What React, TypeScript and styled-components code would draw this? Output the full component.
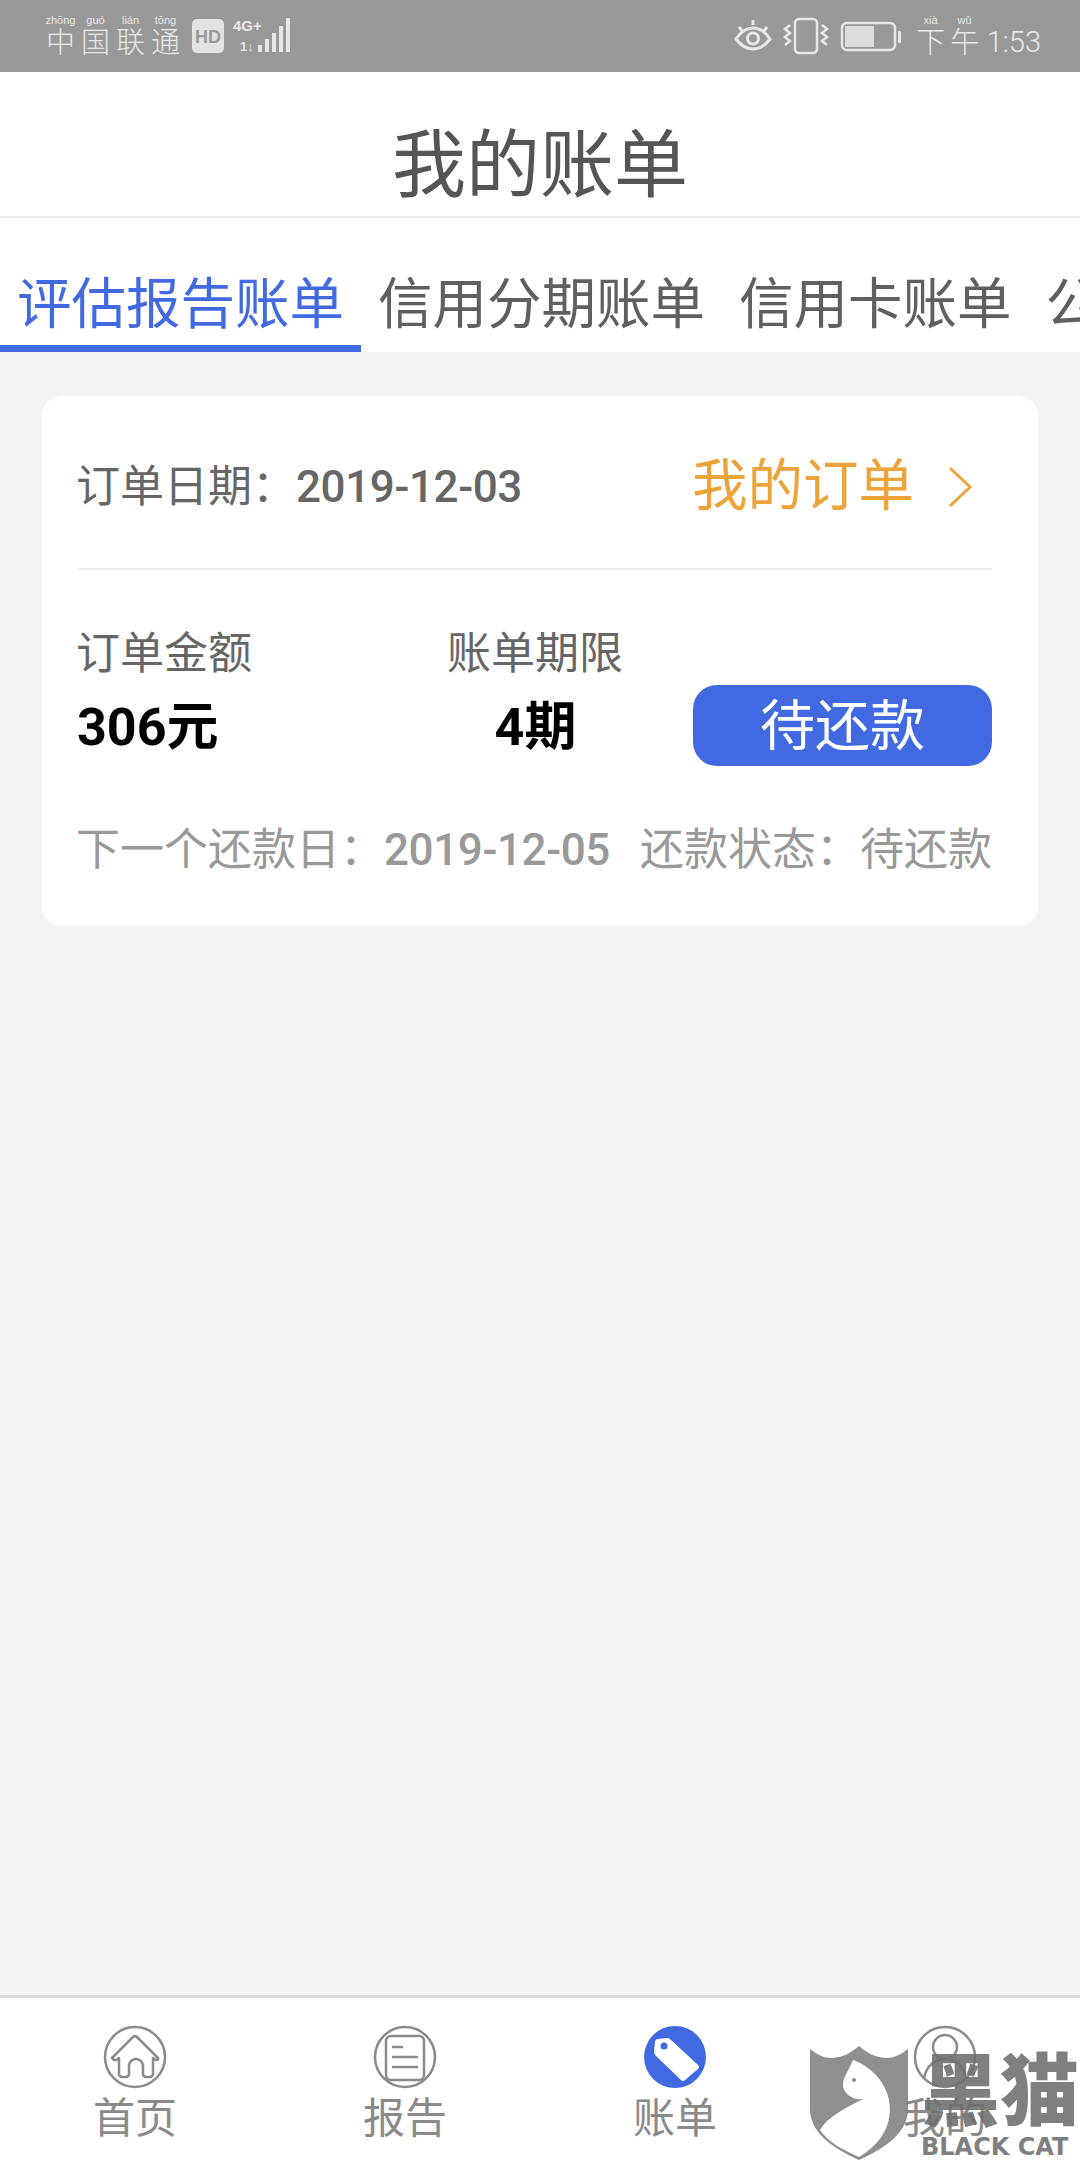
import styled, { createGlobalStyle } from "styled-components"

const CJK = `"Roboto", "Noto Sans CJK SC", sans-serif`

const GlobalStyle = createGlobalStyle`
    html, body {
        margin: 0;
        padding: 0;
        background: #f4f4f4;
    }
    * {
        box-sizing: border-box;
    }
`

const Page = styled.div`
    position: relative;
    width: 1080px;
    height: 2160px;
    display: flex;
    flex-direction: column;
    overflow: hidden;
    background: #f4f4f4;
    font-family: ${CJK};
`

// ── Status bar ────────────────────────────────────────────────────────────────

const StatusBar = styled.div`
    height: 72px;
    flex-shrink: 0;
    display: flex;
    align-items: center;
    justify-content: space-between;
    padding: 0 39px 0 43px;
    background: #999999;
    color: #e6e6e6;
`

const StatusGroup = styled.div`
    display: flex;
    align-items: center;
`

const PinyinCol = styled.div<{ $narrow?: boolean }>`
    width: ${({ $narrow }) => ($narrow ? 34 : 35)}px;
    display: flex;
    flex-direction: column;
    align-items: center;
    font-weight: 300;
`

const Pinyin = styled.span`
    font-size: 11px;
    line-height: 12px;
    height: 12px;
    margin-top: 2px;
    font-family: "Liberation Sans", sans-serif;
`

const PinyinChar = styled.span`
    font-size: 29px;
    line-height: 34px;
`

const StatusTime = styled.span`
    margin-left: 5px;
    margin-top: 12px;
    font-size: 29px;
    line-height: 36px;
    font-weight: 300;
`

// ── Header and tabs ───────────────────────────────────────────────────────────

const Header = styled.header`
    height: 146px;
    flex-shrink: 0;
    display: flex;
    align-items: center;
    justify-content: center;
    padding-top: 44px;
    background: #ffffff;
    border-bottom: 2px solid #e9e9e9;
    font-size: 74px;
    line-height: 80px;
    color: #555555;
`

const Tabs = styled.nav`
    height: 134px;
    flex-shrink: 0;
    display: flex;
    background: #ffffff;
    overflow: hidden;
`

const Tab = styled.div<{ $active?: boolean }>`
    flex-shrink: 0;
    padding: 59px 17px 14px;
    font-size: 54.500px;
    line-height: 54px;
    white-space: nowrap;
    color: ${({ $active }) => ($active ? "#4169e1" : "#5f5f5f")};
    border-bottom: 7px solid ${({ $active }) => ($active ? "#4169e1" : "transparent")};
`

// ── Bill card ─────────────────────────────────────────────────────────────────

const Card = styled.section`
    margin: 44px 42px 0;
    padding: 0 46px 54px 36px;
    border-radius: 20px;
    background: #ffffff;
`

const CardTop = styled.div`
    height: 174px;
    display: flex;
    align-items: center;
    justify-content: space-between;
    padding-top: 9px;
    border-bottom: 2px solid #eeeeee;
`

const OrderDate = styled.div`
    margin-left: -2px;
    font-size: 44px;
    line-height: 54px;
    color: #666666;
    white-space: nowrap;
`

const DateValue = styled.span`
    font-weight: 500;
    letter-spacing: -0.4px;
`

const OrderLink = styled.div`
    display: flex;
    align-items: center;
    font-size: 55.500px;
    line-height: 64px;
    color: #eba33a;
    padding-right: 18px;
`

const Chevron = styled.svg`
    margin-left: 32px;
`

const Metrics = styled.div`
    display: flex;
    align-items: flex-end;
`

const Metric = styled.div<{ $width: number; $center?: boolean }>`
    width: ${({ $width }) => $width}px;
    margin-bottom: 10px;
    display: flex;
    flex-direction: column;
    gap: 24px;
    padding-top: 62px;
    align-items: ${({ $center }) => ($center ? "center" : "flex-start")};
`

const MetricLabel = styled.div`
    margin-left: -2px;
    font-size: 44px;
    line-height: 44px;
    color: #666666;
    white-space: nowrap;
`

const MetricValue = styled.div`
    margin-left: -1px;
    font-size: 52px;
    line-height: 56px;
    font-weight: 700;
    color: #000000;
    white-space: nowrap;
`

const StatusButton = styled.div`
    width: 299px;
    height: 81px;
    margin-left: auto;
    display: flex;
    align-items: center;
    justify-content: center;
    border-radius: 24px;
    background: #4169e1;
    color: #ffffff;
    font-size: 55px;
    line-height: 60px;
`

const CardFooter = styled.div`
    margin-top: 62px;
    margin-left: -2px;
    display: flex;
    justify-content: space-between;
    font-size: 44px;
    line-height: 44px;
    color: #999999;
    white-space: nowrap;
`

// ── Bottom navigation ─────────────────────────────────────────────────────────

const Spacer = styled.div`
    flex: 1;
`

const BottomNav = styled.nav`
    height: 165px;
    flex-shrink: 0;
    display: flex;
    padding-top: 27px;
    background: #ffffff;
    border-top: 3px solid #dddddd;
`

const NavItem = styled.div`
    width: 270px;
    display: flex;
    flex-direction: column;
    align-items: center;
    gap: 8px;
    font-size: 42px;
    line-height: 44px;
    color: #8a8a8a;
`

// ── Watermark ─────────────────────────────────────────────────────────────────

const Watermark = styled.div`
    position: absolute;
    left: 810px;
    top: 2046px;
    display: flex;
    gap: 13px;
    color: #6e6e6e;
    opacity: 0.88;
`

const WatermarkText = styled.div`
    display: flex;
    flex-direction: column;
    padding-top: 5px;
`

const WatermarkTitle = styled.span`
    font-size: 79px;
    line-height: 84px;
    font-weight: 900;
    white-space: nowrap;
`

const WatermarkSub = styled.span`
    font-family: "DejaVu Sans", sans-serif;
    font-size: 24px;
    line-height: 24px;
    font-weight: 700;
    white-space: nowrap;
`

// ── Icons ─────────────────────────────────────────────────────────────────────

function EyeIcon() {
    return (
        <svg width="38" height="34" viewBox="0 0 38 34" fill="none" stroke="#e6e6e6" strokeWidth="3">
            <path d="M2 20C8 11 14 9 19 9s11 2 17 11c-6 8-12 10-17 10S8 28 2 20Z" />
            <circle cx="19" cy="19.500" r="5.500" />
            <path d="M5 8l3 4M19 1v5M33 8l-3 4" />
        </svg>
    )
}

function VibrateIcon() {
    return (
        <svg width="48" height="38" viewBox="0 0 48 38" fill="none" stroke="#e6e6e6" strokeWidth="2.500" style={{ marginLeft: 10 }}>
            <rect x="13" y="2" width="22" height="34" rx="4" />
            <path d="M8 8l-5 4 5 4-5 4 5 4-5 4M40 8l5 4-5 4 5 4-5 4 5 4" />
        </svg>
    )
}

function BatteryIcon() {
    return (
        <svg width="62" height="36" viewBox="0 0 62 36" fill="none" style={{ marginLeft: 10 }}>
            <rect x="2" y="5" width="53" height="27" rx="5" stroke="#e6e6e6" strokeWidth="2.500" />
            <rect x="5" y="8" width="29" height="21" fill="#dcdcdc" />
            <rect x="58" y="13" width="3" height="12" rx="1" fill="#e6e6e6" />
        </svg>
    )
}

function SignalIcon() {
    return (
        <svg width="64" height="42" viewBox="0 0 64 42" style={{ marginLeft: 8 }}>
            <text x="1" y="16" fontSize="15" fontWeight="700" fill="#e6e6e6" fontFamily="Liberation Sans">4G+</text>
            <text x="8" y="36" fontSize="13" fontWeight="700" fill="#e6e6e6" fontFamily="Liberation Sans">1↓</text>
            <rect x="26" y="30" width="4" height="7" fill="#e6e6e6" />
            <rect x="33" y="24" width="4" height="13" fill="#e6e6e6" />
            <rect x="40" y="18" width="4" height="19" fill="#e6e6e6" />
            <rect x="47" y="11" width="4" height="26" fill="#e6e6e6" />
            <rect x="54" y="3" width="4" height="34" fill="#e6e6e6" />
        </svg>
    )
}

function HdBadge() {
    return (
        <svg width="32" height="34" viewBox="0 0 32 34" style={{ marginLeft: 9 }}>
            <rect width="32" height="34" rx="5" fill="#e2e2e2" />
            <text x="16" y="24" fontSize="18" fontWeight="700" textAnchor="middle" fill="#999999" fontFamily="Liberation Sans">HD</text>
        </svg>
    )
}

function HomeIcon() {
    return (
        <svg width="64" height="64" viewBox="0 0 64 64" fill="none" stroke="#8a8a8a" strokeWidth="2.500" strokeLinejoin="round" strokeLinecap="round">
            <circle cx="32" cy="32" r="30" />
            <path d="M9 33 30 12a3 3 0 0 1 4 0L55 33c1 2-2 3-4 1l-1-1v16a3 3 0 0 1-3 3h-4a3 3 0 0 1-3-3v-8a7 7 0 0 0-14 0v8a3 3 0 0 1-3 3h-4a3 3 0 0 1-3-3V33l-1 1c-2 2-6 1-5-1Z" />
        </svg>
    )
}

function ReportIcon() {
    return (
        <svg width="64" height="64" viewBox="0 0 64 64" fill="none" stroke="#8a8a8a" strokeWidth="2.500" strokeLinecap="round">
            <circle cx="32" cy="32" r="30" />
            <rect x="13" y="11" width="38" height="44" rx="5" />
            <path d="M20 22h9M20 32h24M20 42h24" />
        </svg>
    )
}

function TagIcon() {
    return (
        <svg width="64" height="64" viewBox="0 0 64 64">
            <circle cx="32" cy="32" r="31" fill="#4169e1" />
            <path d="M15 14l9-1q2 0 4 2l27 25q2 2 0 4L42 55q-2 2-4 0L13 31q-2-2-2-4l1-10q0-3 3-3Z" fill="#ffffff" />
            <circle cx="21" cy="21" r="3.500" fill="#4169e1" />
        </svg>
    )
}

function UserIcon() {
    return (
        <svg width="64" height="64" viewBox="0 0 64 64" fill="none" stroke="#8a8a8a" strokeWidth="2.500">
            <circle cx="32" cy="32" r="30" />
            <circle cx="32" cy="22" r="12" />
            <path d="M11 54c2-14 12-20 21-20s19 6 21 20" />
        </svg>
    )
}

function ShieldLogo() {
    return (
        <svg width="98" height="114" viewBox="0 0 98 114">
            <path d="M0 3c8 6 14 9 21 9 11 0 20-5 28-12 8 7 17 12 28 12 7 0 13-3 21-9v60c0 22-20 38-49 51C20 101 0 85 0 63Z" fill="#808080" />
            <path d="M43 14C55 18 72 30 78 50 84 72 76 95 49 111 33 104 18 96 10 84 18 70 36 62 53 53 44 54 36 50 33 41 32 32 38 26 43 14Z" fill="#ffffff" />
            <circle cx="44" cy="34" r="2" fill="#808080" />
        </svg>
    )
}

const CARRIER = [
    { pinyin: "zhōng", char: "中" },
    { pinyin: "guó", char: "国" },
    { pinyin: "lián", char: "联" },
    { pinyin: "tōng", char: "通" },
]

const TABS = ["评估报告账单", "信用分期账单", "信用卡账单", "公积金账单"]

export default function App() {
    return (
        <Page>
            <GlobalStyle />
            <StatusBar>
                <StatusGroup>
                    {CARRIER.map((c) => (
                        <PinyinCol key={c.char}>
                            <Pinyin>{c.pinyin}</Pinyin>
                            <PinyinChar>{c.char}</PinyinChar>
                        </PinyinCol>
                    ))}
                    <HdBadge />
                    <SignalIcon />
                </StatusGroup>
                <StatusGroup>
                    <EyeIcon />
                    <VibrateIcon />
                    <BatteryIcon />
                    <PinyinCol $narrow style={{ marginLeft: 12 }}>
                        <Pinyin>xià</Pinyin>
                        <PinyinChar>下</PinyinChar>
                    </PinyinCol>
                    <PinyinCol $narrow>
                        <Pinyin>wǔ</Pinyin>
                        <PinyinChar>午</PinyinChar>
                    </PinyinCol>
                    <StatusTime>1:53</StatusTime>
                </StatusGroup>
            </StatusBar>

            <Header>我的账单</Header>

            <Tabs>
                {TABS.map((t, i) => (
                    <Tab key={t} $active={i === 0}>{t}</Tab>
                ))}
            </Tabs>

            <Card>
                <CardTop>
                    <OrderDate>
                        订单日期：<DateValue>2019-12-03</DateValue>
                    </OrderDate>
                    <OrderLink>
                        我的订单
                        <Chevron width="28" height="42" viewBox="0 0 28 42" fill="none" stroke="#eba33a" strokeWidth="3">
                            <path d="M4 2l20 19L4 40" />
                        </Chevron>
                    </OrderLink>
                </CardTop>
                <Metrics>
                    <Metric $width={370}>
                        <MetricLabel>订单金额</MetricLabel>
                        <MetricValue>306元</MetricValue>
                    </Metric>
                    <Metric $width={176} $center>
                        <MetricLabel>账单期限</MetricLabel>
                        <MetricValue>4期</MetricValue>
                    </Metric>
                    <StatusButton>待还款</StatusButton>
                </Metrics>
                <CardFooter>
                    <span>
                        下一个还款日：<DateValue>2019-12-05</DateValue>
                    </span>
                    <span>还款状态：待还款</span>
                </CardFooter>
            </Card>

            <Spacer />

            <BottomNav>
                <NavItem>
                    <HomeIcon />
                    首页
                </NavItem>
                <NavItem>
                    <ReportIcon />
                    报告
                </NavItem>
                <NavItem>
                    <TagIcon />
                    账单
                </NavItem>
                <NavItem>
                    <UserIcon />
                    我的
                </NavItem>
            </BottomNav>

            <Watermark>
                <ShieldLogo />
                <WatermarkText>
                    <WatermarkTitle>黑猫</WatermarkTitle>
                    <WatermarkSub>BLACK CAT</WatermarkSub>
                </WatermarkText>
            </Watermark>
        </Page>
    )
}
